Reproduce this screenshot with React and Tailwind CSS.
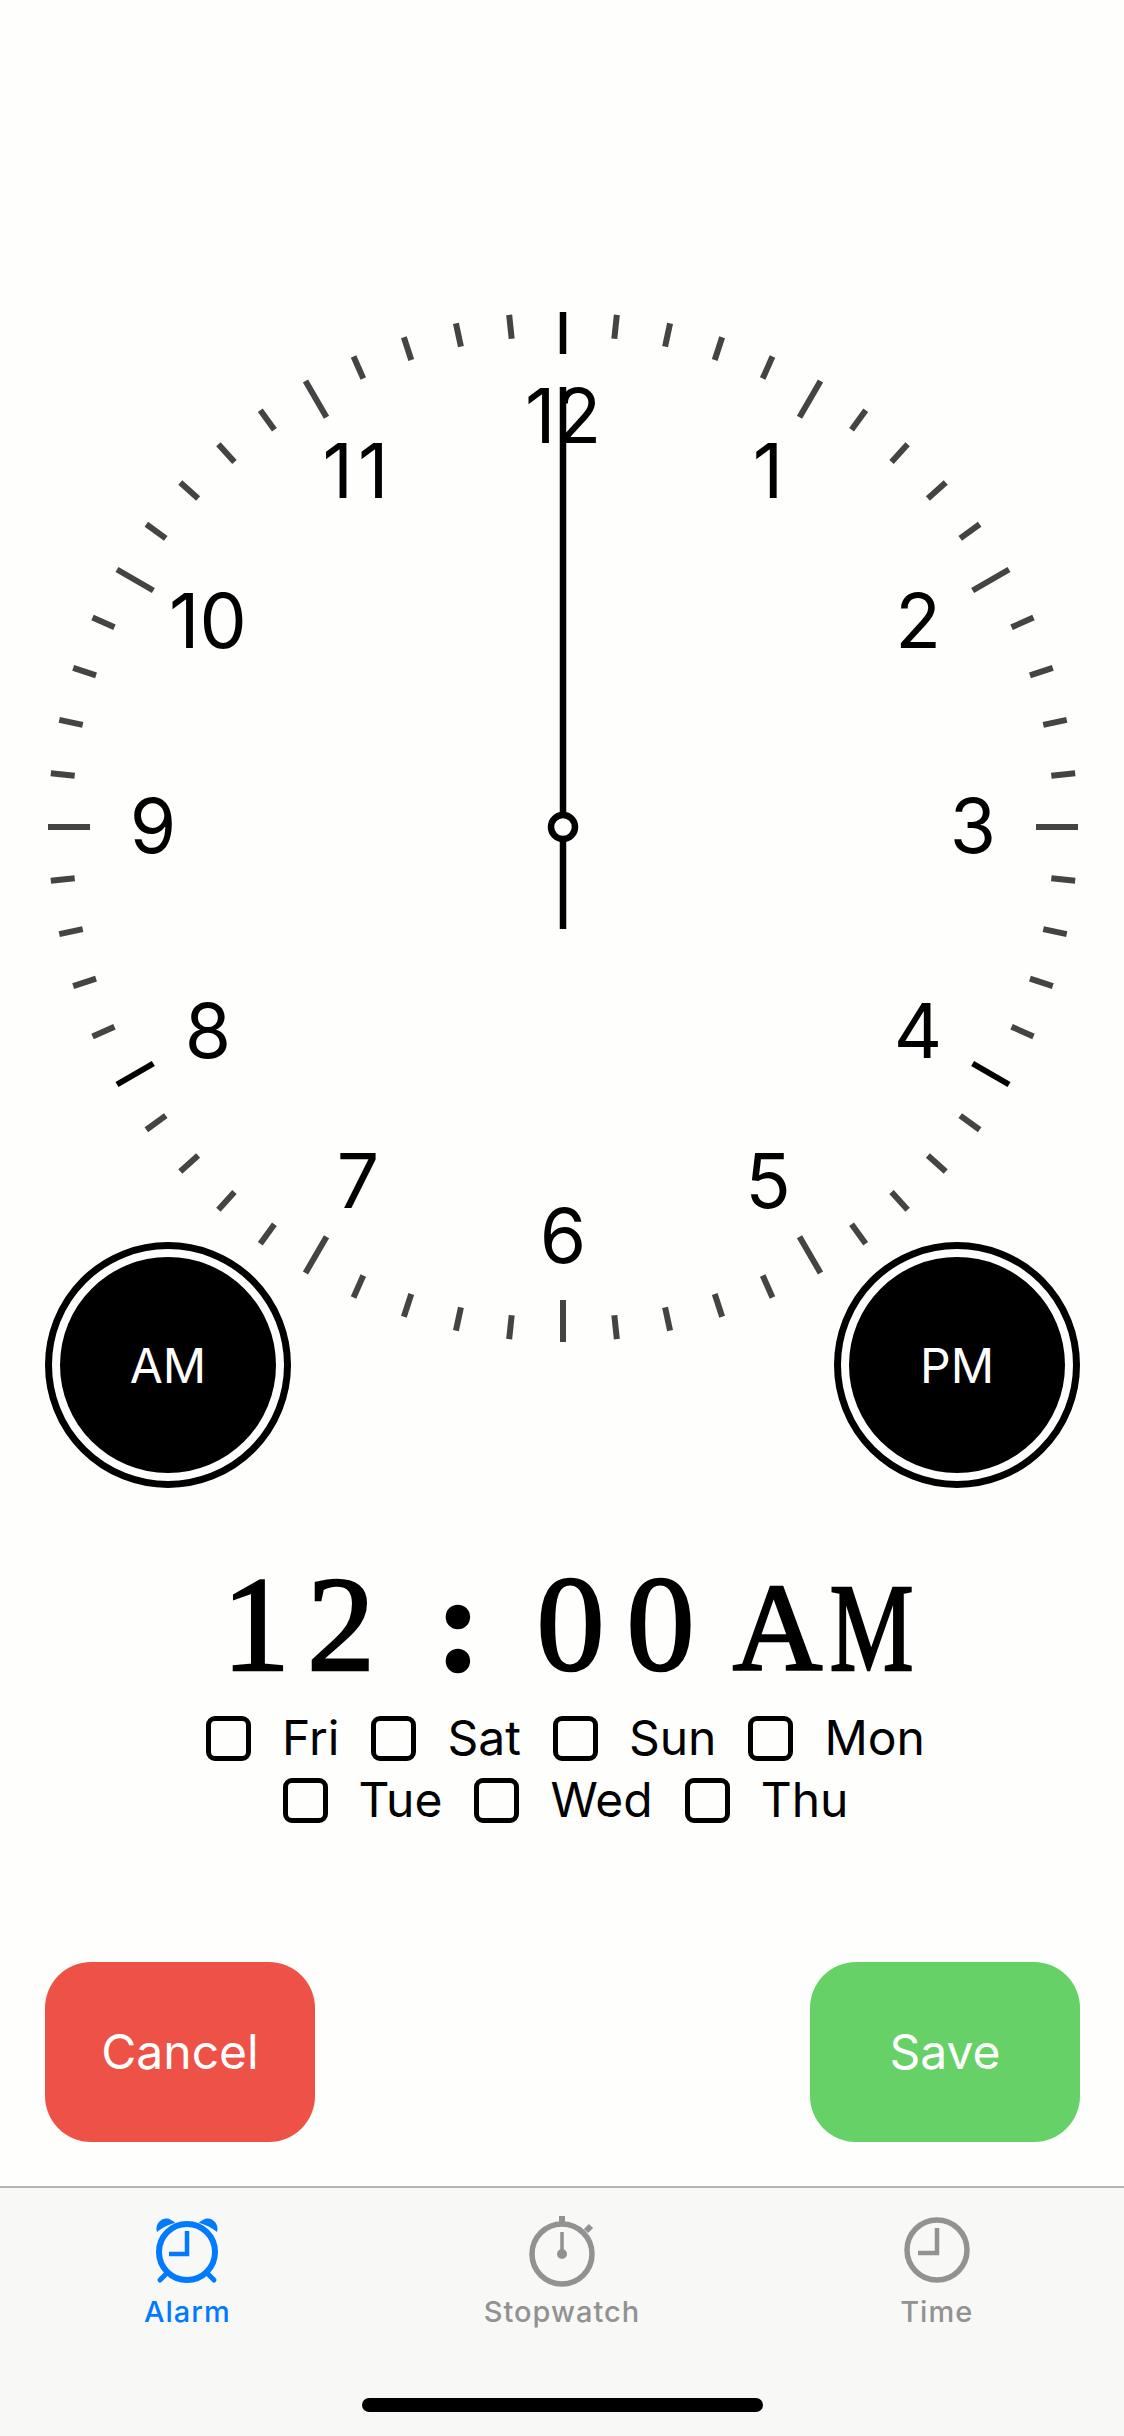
import React from "react";

const SANS = "font-['Inter','Liberation_Sans',sans-serif]";
const NUMBERS = [12, 1, 2, 3, 4, 5, 6, 7, 8, 9, 10, 11];
const CX = 515;
const CY = 515;

function Ticks() {
  const items = [];
  for (let i = 0; i < 60; i++) {
    const major = i % 5 === 0;
    const black = i === 0 || i === 20 || i === 40;
    const a = (i * Math.PI) / 30;
    const r1 = 515;
    const r2 = major ? 473 : 491;
    items.push(
      <line
        key={i}
        x1={CX + r1 * Math.sin(a)}
        y1={CY - r1 * Math.cos(a)}
        x2={CX + r2 * Math.sin(a)}
        y2={CY - r2 * Math.cos(a)}
        stroke={black ? "#000" : "#444"}
        strokeWidth={i === 0 ? 6.5 : 6}
      />
    );
  }
  return <>{items}</>;
}

function Dial() {
  return (
    <div className="relative ml-[48px] h-[1030px] w-[1030px]">
      <svg className="absolute inset-0" width="1030" height="1030" viewBox="0 0 1030 1030">
        <Ticks />
        <line x1={CX} y1="75" x2={CX} y2="617" stroke="#000" strokeWidth="6.5" />
        <circle cx={CX} cy={CY} r="12" fill="#fefefd" stroke="#000" strokeWidth="6.5" />
      </svg>
      {NUMBERS.map((n, i) => {
        const a = (i * Math.PI) / 6;
        return (
          <span
            key={n}
            className={`absolute -translate-x-1/2 -translate-y-1/2 text-[75px] leading-none text-black ${n === 11 ? "tracking-[5px]" : ""} ${SANS}`}
            style={{ left: CX + 410 * Math.sin(a), top: CY - 2 - 410 * Math.cos(a) }}
          >
            {n}
          </span>
        );
      })}
    </div>
  );
}

function Meridiem({ label }) {
  return (
    <button className="flex h-[246px] w-[246px] items-center justify-center rounded-full border-[7px] border-black bg-[#fefefd]">
      <span className={`flex h-[216px] w-[216px] items-center justify-center rounded-full bg-black pt-[2px] text-[48px] text-white ${SANS}`}>
        {label}
      </span>
    </button>
  );
}

function Day({ label }) {
  return (
    <label className="flex items-center gap-[31px]">
      <span className="h-[45px] w-[45px] rounded-[9px] border-[5px] border-black" />
      <span className={`text-[48px] leading-none text-black ${SANS}`}>{label}</span>
    </label>
  );
}

function AlarmIcon() {
  return (
    <svg width="72" height="72" viewBox="0 0 72 72" fill="none" stroke="currentColor">
      <circle cx="36" cy="37" r="28" strokeWidth="6" />
      <path d="M36 16V39H18" strokeWidth="4.5" />
      <path d="M15 59L9 65M57 59L63 65" strokeWidth="5" strokeLinecap="round" />
      <path d="M6 17C3 8 13 0 20 5C22 6 24 7 24 8C16 10 11 13 6 17Z" fill="currentColor" stroke="none" />
      <path d="M66 17C69 8 59 0 52 5C50 6 48 7 48 8C56 10 61 13 66 17Z" fill="currentColor" stroke="none" />
    </svg>
  );
}

function StopwatchIcon() {
  return (
    <svg width="72" height="72" viewBox="0 0 72 72" fill="none" stroke="currentColor">
      <circle cx="36" cy="39" r="30" strokeWidth="5.5" />
      <path d="M36 9V1" strokeWidth="6" />
      <path d="M60 16L65 11" strokeWidth="6" />
      <path d="M36 17V40" strokeWidth="3.5" />
      <circle cx="36" cy="39" r="5" fill="currentColor" stroke="none" />
    </svg>
  );
}

function ClockIcon() {
  return (
    <svg width="72" height="72" viewBox="0 0 72 72" fill="none" stroke="currentColor">
      <circle cx="36" cy="35" r="30" strokeWidth="5.5" />
      <path d="M36 13V38H17" strokeWidth="4.5" />
    </svg>
  );
}

function Tab({ label, active, children }) {
  return (
    <div className={`flex flex-col items-center ${active ? "text-[#007aff]" : "text-[#929292]"}`}>
      {children}
      <span className={`mt-[7px] text-[29px] font-medium leading-[36px] tracking-[1px] ${SANS}`}>{label}</span>
    </div>
  );
}

export default function App() {
  return (
    <div className="flex h-[2436px] w-[1124px] flex-col bg-[#fefefd]">
      <div className="pt-[312px]">
        <Dial />
      </div>
      <div className="-mt-[100px] flex justify-between pl-[45px] pr-[44px]">
        <Meridiem label="AM" />
        <Meridiem label="PM" />
      </div>
      <div className="mt-[64px] flex items-baseline justify-center pl-[2px] font-['Liberation_Serif',serif] text-[136px] leading-[144px] text-black [-webkit-text-stroke:2.5px_#000]">
        <span className="w-[85px] text-center">1</span>
        <span className="w-[85px] text-center">2</span>
        <span className="ml-[30px] w-[90px] text-center font-bold">:</span>
        <span className="ml-[22px] w-[90px] text-center">0</span>
        <span className="w-[90px] text-center">0</span>
        <span className="ml-[27px] inline-block w-[90px] text-center text-[124px]">A</span>
        <span className="-ml-[4px] mr-[4px] inline-block w-[90px] scale-x-[0.76] text-center text-[124px]">M</span>
      </div>
      <div className="mt-[13px] flex flex-col items-center gap-[14px] pl-[7px]">
        <div className="flex gap-[32px]">
          {["Fri", "Sat", "Sun", "Mon"].map((d) => (
            <Day key={d} label={d} />
          ))}
        </div>
        <div className="flex gap-[32px]">
          {["Tue", "Wed", "Thu"].map((d) => (
            <Day key={d} label={d} />
          ))}
        </div>
      </div>
      <div className="mt-[138px] flex justify-between pl-[45px] pr-[44px]">
        <button className={`h-[180px] w-[270px] rounded-[46px] bg-[#ee5246] text-[48px] text-white ${SANS}`}>Cancel</button>
        <button className={`h-[180px] w-[270px] rounded-[46px] bg-[#66d166] text-[48px] text-white ${SANS}`}>Save</button>
      </div>
      <div className="relative mt-auto h-[250px] border-t-2 border-[#b4b4b4] bg-[#f8f8f7]">
        <div className="grid grid-cols-3 pt-[27px]">
          <Tab label="Alarm" active>
            <AlarmIcon />
          </Tab>
          <Tab label="Stopwatch">
            <StopwatchIcon />
          </Tab>
          <Tab label="Time">
            <ClockIcon />
          </Tab>
        </div>
        <div className="absolute bottom-[24px] left-[362px] h-[14px] w-[401px] rounded-full bg-black" />
      </div>
    </div>
  );
}
